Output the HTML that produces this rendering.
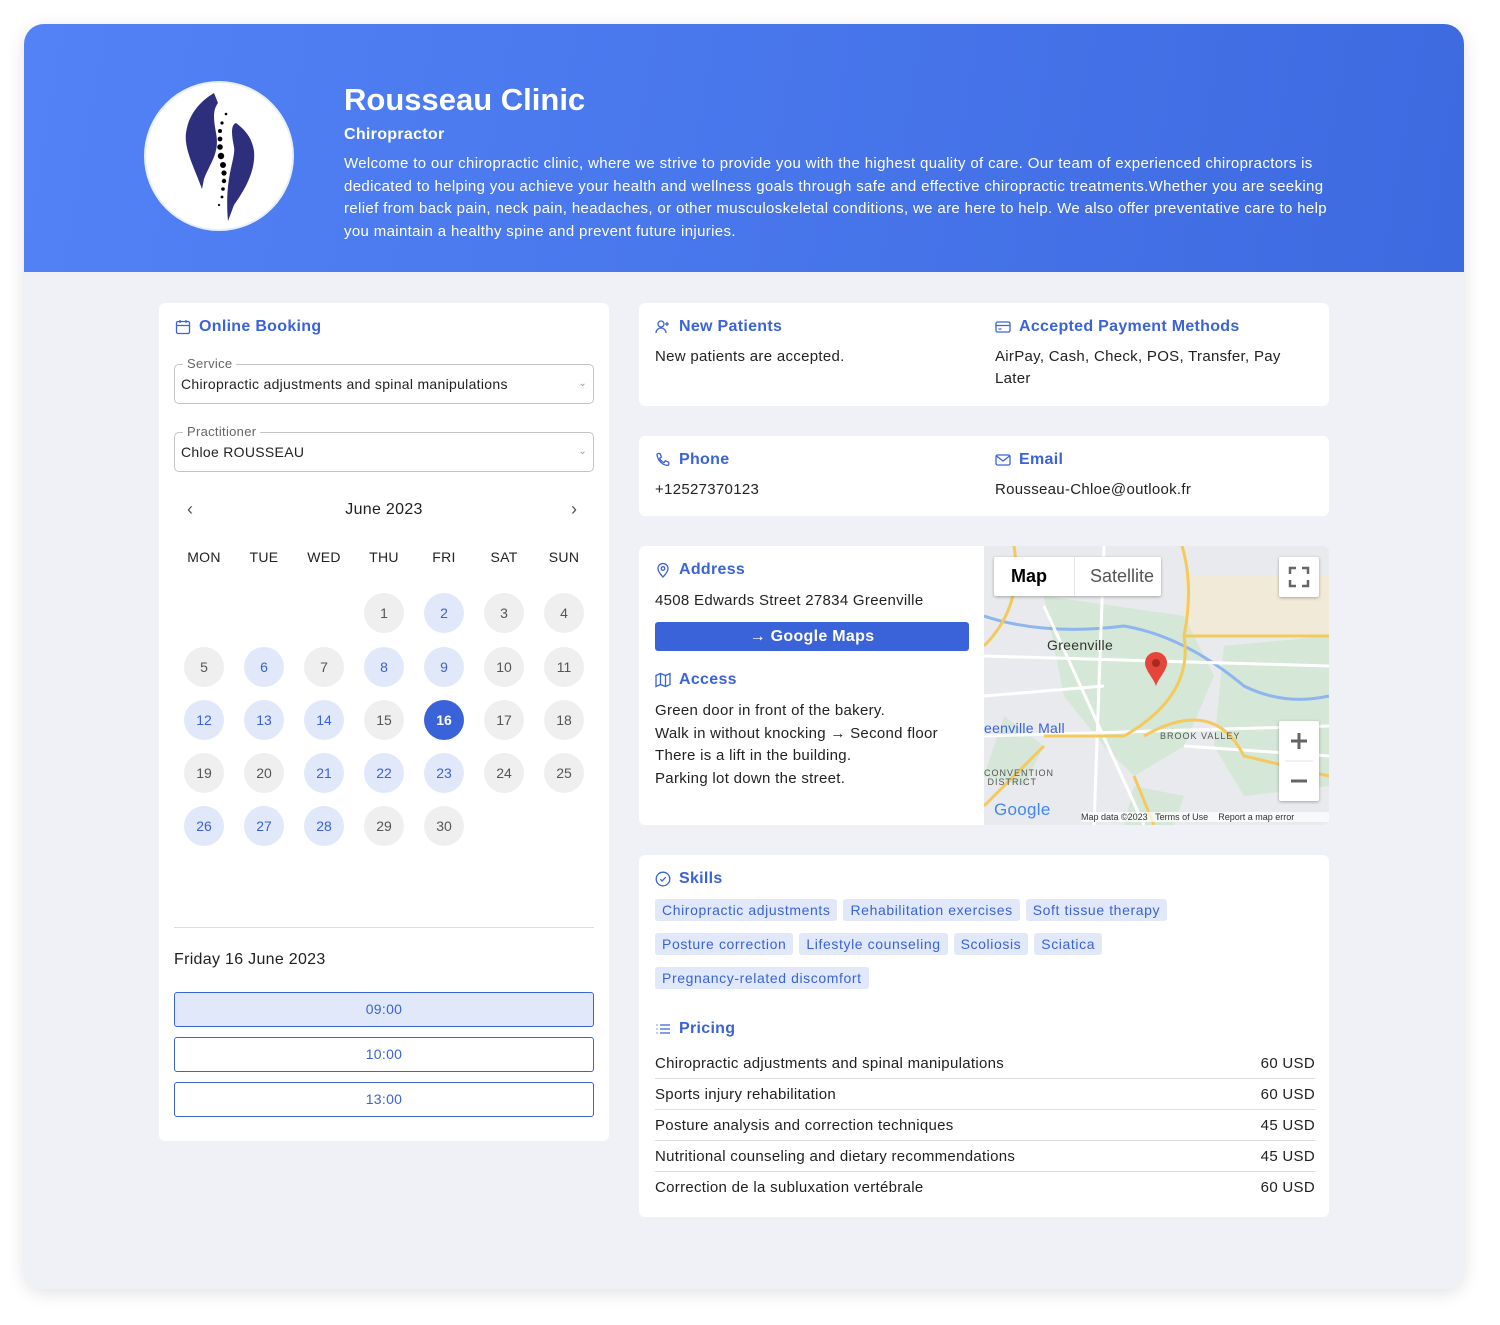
<!DOCTYPE html>
<html><head><meta charset="utf-8"><style>
*{box-sizing:border-box;margin:0;padding:0}
body{width:1500px;height:1325px;background:#fff;font-family:"Liberation Sans",sans-serif;color:#1f1f1f;position:relative;overflow:hidden;letter-spacing:.3px}
.card{position:absolute;left:24px;top:24px;width:1440px;height:1265px;border-radius:20px;background:#eff1f6;box-shadow:0 4px 18px rgba(0,0,0,.12);overflow:hidden}
.hdr{position:absolute;left:0;top:0;width:1440px;height:248px;background:linear-gradient(100deg,#5282f6,#3e6ae0)}
.abs{position:absolute}
.panel{position:absolute;background:#fff;border-radius:6px}
.h{position:absolute;color:#3b63d9;font-size:16px;font-weight:bold;display:flex;align-items:center;gap:8px}
.t{position:absolute;font-size:15px;line-height:22px;color:#222}
.sel{position:absolute;left:15px;width:420px;height:40px;border:1px solid #c4c4c4;border-radius:5px;font-size:14px;padding:11px 6px;color:#222}
.sel .lab{position:absolute;top:-9px;left:8px;background:#fff;padding:0 4px;font-size:13px;color:#666;line-height:16px}
.sel .ch{position:absolute;right:6px;top:13px;font-size:10px;color:#999}
.d{position:absolute;width:40px;height:40px;border-radius:50%;background:#efefef;color:#555;font-size:14px;text-align:center;line-height:40px;letter-spacing:0}
.d.b{background:#e0e8fa;color:#3b63d9}
.d.s{background:#3b63d9;color:#fff;font-weight:bold}
.dow{position:absolute;top:246px;font-size:14px;width:60px;text-align:center;color:#222}
.slot{position:absolute;left:15px;width:420px;height:35px;border:1px solid #3b63d9;border-radius:3px;text-align:center;line-height:33px;color:#3b63d9;font-size:14px}
.tag{display:inline-block;background:#e0e8fa;color:#3b63d9;font-size:14px;padding:3px 7px;border-radius:3px;margin:0 6px 12px 0;line-height:16px;letter-spacing:.6px}
.pr{display:flex;justify-content:space-between;font-size:15px;height:31px;line-height:31px;border-bottom:1px solid #ddd}
.pr:last-child{border-bottom:none}
</style></head><body>
<div class="card">
<div class="hdr">
 <div class="abs" style="left:120px;top:57px;width:150px;height:150px;border-radius:50%;background:#fff;border:2px solid #e8eefc">
  <svg width="150" height="150" viewBox="0 0 150 150" style="position:absolute;left:-2px;top:-2px">
   <path d="M70 12 C60 18 45 30 42 52 C40 68 50 86 58 108 L60 98 C66 82 76 72 72 52 C70 40 68 30 74 22 Z" fill="#2d2f7c"/>
   <path d="M92 42 C86 44 88 56 90 66 C92 78 80 96 84 140 L90 124 C100 110 112 90 110 70 C108 56 100 48 92 42 Z" fill="#2d2f7c"/>
   <g fill="#000"><circle cx="82" cy="33" r="1.3"/><circle cx="78" cy="42" r="1.6"/><circle cx="76" cy="50" r="2"/><circle cx="76" cy="58" r="2.4"/><circle cx="76" cy="66" r="2.8"/><circle cx="77" cy="75" r="3.2"/><circle cx="79" cy="84" r="3"/><circle cx="80" cy="92" r="2.6"/><circle cx="80" cy="100" r="2.2"/><circle cx="79" cy="108" r="1.8"/><circle cx="78" cy="116" r="1.4"/><circle cx="75" cy="124" r="1.1"/></g>
  </svg>
 </div>
 <div class="abs" style="left:320px;top:58px;color:#fff;font-size:31px;font-weight:bold;letter-spacing:0">Rousseau Clinic</div>
 <div class="abs" style="left:320px;top:102px;color:#fff;font-size:16px;font-weight:bold">Chiropractor</div>
 <div class="abs" style="left:320px;top:129px;width:1000px;color:#fff;font-size:15px;line-height:22.5px;letter-spacing:.35px">Welcome to our chiropractic clinic, where we strive to provide you with the highest quality of care. Our team of experienced chiropractors is dedicated to helping you achieve your health and wellness goals through safe and effective chiropractic treatments.Whether you are seeking relief from back pain, neck pain, headaches, or other musculoskeletal conditions, we are here to help. We also offer preventative care to help you maintain a healthy spine and prevent future injuries.</div>
</div>

<div class="panel" style="left:135px;top:279px;width:450px;height:838px">
 <div class="h" style="left:16px;top:15px"><svg width="16" height="16" viewBox="0 0 16 16" fill="none" stroke="#3b63d9" stroke-width="1.3"><rect x="1.5" y="2.5" width="13" height="12" rx="1.5"/><path d="M1.5 6.5h13M5 1v3M11 1v3"/></svg>Online Booking</div>
 <div class="sel" style="top:61px"><span class="lab">Service</span>Chiropractic adjustments and spinal manipulations<span class="ch">&#8964;</span></div>
 <div class="sel" style="top:129px"><span class="lab">Practitioner</span>Chloe ROUSSEAU<span class="ch">&#8964;</span></div>
 <div class="abs" style="left:28px;top:196px;font-size:18px;color:#555">&#8249;</div>
 <div class="abs" style="left:0;width:450px;top:198px;text-align:center;font-size:16px">June 2023</div>
 <div class="abs" style="left:412px;top:196px;font-size:18px;color:#555">&#8250;</div>
 <div class="dow" style="left:15px">MON</div><div class="dow" style="left:75px">TUE</div><div class="dow" style="left:135px">WED</div><div class="dow" style="left:195px">THU</div><div class="dow" style="left:255px">FRI</div><div class="dow" style="left:315px">SAT</div><div class="dow" style="left:375px">SUN</div>
 <div class="d" style="left:205px;top:290px">1</div><div class="d b" style="left:265px;top:290px">2</div><div class="d" style="left:325px;top:290px">3</div><div class="d" style="left:385px;top:290px">4</div>
 <div class="d" style="left:25px;top:344px">5</div><div class="d b" style="left:85px;top:344px">6</div><div class="d" style="left:145px;top:344px">7</div><div class="d b" style="left:205px;top:344px">8</div><div class="d b" style="left:265px;top:344px">9</div><div class="d" style="left:325px;top:344px">10</div><div class="d" style="left:385px;top:344px">11</div>
 <div class="d b" style="left:25px;top:397px">12</div><div class="d b" style="left:85px;top:397px">13</div><div class="d b" style="left:145px;top:397px">14</div><div class="d" style="left:205px;top:397px">15</div><div class="d s" style="left:265px;top:397px">16</div><div class="d" style="left:325px;top:397px">17</div><div class="d" style="left:385px;top:397px">18</div>
 <div class="d" style="left:25px;top:450px">19</div><div class="d" style="left:85px;top:450px">20</div><div class="d b" style="left:145px;top:450px">21</div><div class="d b" style="left:205px;top:450px">22</div><div class="d b" style="left:265px;top:450px">23</div><div class="d" style="left:325px;top:450px">24</div><div class="d" style="left:385px;top:450px">25</div>
 <div class="d b" style="left:25px;top:503px">26</div><div class="d b" style="left:85px;top:503px">27</div><div class="d b" style="left:145px;top:503px">28</div><div class="d" style="left:205px;top:503px">29</div><div class="d" style="left:265px;top:503px">30</div>
 <div class="abs" style="left:15px;top:624px;width:420px;height:1px;background:#ddd"></div>
 <div class="abs" style="left:15px;top:648px;font-size:16px">Friday 16 June 2023</div>
 <div class="slot" style="top:689px;background:#e0e8fa">09:00</div>
 <div class="slot" style="top:734px">10:00</div>
 <div class="slot" style="top:779px">13:00</div>
</div>

<div class="panel" style="left:615px;top:279px;width:690px;height:103px">
 <div class="h" style="left:16px;top:15px"><svg width="16" height="16" viewBox="0 0 16 16" fill="none" stroke="#3b63d9" stroke-width="1.3"><circle cx="6" cy="5" r="3"/><path d="M1 14c0-3 2.5-5 5-5s5 2 5 5M12 3v4M10 5h4"/></svg>New Patients</div>
 <div class="t" style="left:16px;top:43px">New patients are accepted.</div>
 <div class="h" style="left:356px;top:15px"><svg width="16" height="16" viewBox="0 0 16 16" fill="none" stroke="#3b63d9" stroke-width="1.3"><rect x="1" y="3" width="14" height="10" rx="1.5"/><path d="M1 6.5h14M3.5 10h3"/></svg>Accepted Payment Methods</div>
 <div class="t" style="left:356px;top:43px;width:310px">AirPay, Cash, Check, POS, Transfer, Pay Later</div>
</div>

<div class="panel" style="left:615px;top:412px;width:690px;height:80px">
 <div class="h" style="left:16px;top:15px"><svg width="16" height="16" viewBox="0 0 16 16" fill="none" stroke="#3b63d9" stroke-width="1.3"><path d="M2 2.5c0-.5.5-1 1-1h2l1.5 3.5-1.8 1.2c.8 2 2.4 3.6 4.4 4.4l1.2-1.8 3.5 1.5v2c0 .5-.5 1-1 1C7.5 13.3 2.7 8.5 2 2.5z"/></svg>Phone</div>
 <div class="t" style="left:16px;top:43px">+12527370123</div>
 <div class="h" style="left:356px;top:15px"><svg width="16" height="16" viewBox="0 0 16 16" fill="none" stroke="#3b63d9" stroke-width="1.3"><rect x="1" y="3" width="14" height="10" rx="1.5"/><path d="M1.5 4l6.5 5 6.5-5"/></svg>Email</div>
 <div class="t" style="left:356px;top:43px">Rousseau-Chloe@outlook.fr</div>
</div>

<div class="panel" style="left:615px;top:522px;width:690px;height:279px;overflow:hidden">
 <div class="h" style="left:16px;top:15px"><svg width="16" height="16" viewBox="0 0 16 16" fill="none" stroke="#3b63d9" stroke-width="1.3"><path d="M8 15s5-5 5-8.5A5 5 0 0 0 3 6.5C3 10 8 15 8 15z"/><circle cx="8" cy="6.5" r="1.8"/></svg>Address</div>
 <div class="t" style="left:16px;top:44px">4508 Edwards Street 27834 Greenville</div>
 <div class="abs" style="left:16px;top:76px;width:314px;height:29px;background:#3b63d9;border-radius:3px;color:#fff;text-align:center;line-height:29px;font-size:16px;font-weight:bold">&#8594; Google Maps</div>
 <div class="h" style="left:16px;top:125px"><svg width="16" height="16" viewBox="0 0 16 16" fill="none" stroke="#3b63d9" stroke-width="1.3"><path d="M1 3.5l4.5-2 5 2 4.5-2v11l-4.5 2-5-2-4.5 2z M5.5 1.5v11M10.5 3.5v11"/></svg>Access</div>
 <div class="t" style="left:16px;top:154px;line-height:22.5px">Green door in front of the bakery.<br>Walk in without knocking &#8594; Second floor<br>There is a lift in the building.<br>Parking lot down the street.</div>
 <div class="abs" style="left:345px;top:0;width:345px;height:279px;background:#e8eaed;overflow:hidden">
  <svg width="345" height="279" viewBox="0 0 345 279" style="position:absolute;left:0;top:0">
   <rect x="200" y="30" width="145" height="60" fill="#f2ead8"/>
   <path d="M60 50 L200 70 L230 130 L200 200 L150 230 L120 200 L80 150 Z" fill="#cfe6d0" opacity=".8"/>
   <path d="M240 100 L345 90 L345 240 L260 250 L230 200 Z" fill="#cfe6d0" opacity=".8"/>
   <path d="M20 170 L60 200 L40 240 L0 230Z M150 240 L200 250 L190 279 L140 279Z" fill="#cfe6d0" opacity=".7"/>
   <path d="M0 70 Q60 90 140 80 Q200 90 260 140 Q300 160 345 150" stroke="#8fb5f0" stroke-width="3" fill="none"/>
   <path d="M0 110 L345 120 M0 190 L345 180 M120 0 L110 279 M60 60 L160 279 M0 150 L120 140 M200 200 L345 210" stroke="#fff" stroke-width="3" fill="none"/>
   <path d="M198 0 Q210 40 200 90 L345 90 M200 90 Q210 150 140 190 L60 190 M160 190 Q230 150 260 210 L345 230 M0 100 Q40 60 30 0 M150 230 L170 279 M0 260 L60 200" stroke="#f4c95d" stroke-width="3" fill="none"/>
   <path d="M161 117 a11 11 0 1 1 22 0 c0 8-11 18-11 24 c0-6-11-16-11-24z" fill="#e5453a"/>
   <circle cx="172" cy="117" r="4" fill="#a52a20"/>
  </svg>
  <div class="abs" style="left:63px;top:91px;font-size:14px;color:#333">Greenville</div>
  <div class="abs" style="left:0;top:174px;font-size:14px;color:#3b63d9">eenville Mall</div>
  <div class="abs" style="left:176px;top:185px;font-size:9px;letter-spacing:1px;color:#555">BROOK VALLEY</div>
  <div class="abs" style="left:0;top:223px;font-size:9px;letter-spacing:1px;color:#555;line-height:9px">CONVENTION<br>&nbsp;DISTRICT</div>
  <div class="abs" style="left:10px;top:254px;font-size:17px;color:#4285f4">Google</div>
  <div class="abs" style="left:97px;top:266px;font-size:9px;color:#333;background:rgba(255,255,255,.7);width:248px;letter-spacing:0">Map data ©2023 &nbsp;&nbsp;Terms of Use &nbsp;&nbsp;&nbsp;Report a map error</div>
  <div class="abs" style="left:10px;top:11px;width:167px;height:39px;background:#fff;border-radius:2px;box-shadow:0 1px 3px rgba(0,0,0,.3);font-size:18px;line-height:39px;letter-spacing:0"><span style="position:absolute;left:17px;color:#000;font-weight:bold">Map</span><span style="position:absolute;left:80px;width:1px;height:39px;background:#e5e5e5"></span><span style="position:absolute;left:96px;color:#555">Satellite</span></div>
  <div class="abs" style="left:295px;top:11px;width:40px;height:40px;background:#fff;border-radius:2px;box-shadow:0 1px 3px rgba(0,0,0,.3)"><svg width="40" height="40"><path d="M11 17v-6h6M23 11h6v6M29 23v6h-6M17 29h-6v-6" stroke="#666" stroke-width="2.5" fill="none"/></svg></div>
  <div class="abs" style="left:295px;top:175px;width:40px;height:80px;background:#fff;border-radius:2px;box-shadow:0 1px 3px rgba(0,0,0,.3)"><svg width="40" height="80"><path d="M20 12v16M12 20h16M12 60h16" stroke="#666" stroke-width="3"/><path d="M6 40h28" stroke="#e6e6e6"/></svg></div>
 </div>
</div>

<div class="panel" style="left:615px;top:831px;width:690px;height:362px">
 <div class="h" style="left:16px;top:15px"><svg width="16" height="16" viewBox="0 0 16 16" fill="none" stroke="#3b63d9" stroke-width="1.3"><circle cx="8" cy="8" r="6.8"/><path d="M5.3 8.2l1.8 1.8 3.6-3.8"/></svg>Skills</div>
 <div class="abs" style="left:16px;top:44px;width:670px">
  <span class="tag">Chiropractic adjustments</span><span class="tag">Rehabilitation exercises</span><span class="tag">Soft tissue therapy</span><br>
  <span class="tag">Posture correction</span><span class="tag">Lifestyle counseling</span><span class="tag">Scoliosis</span><span class="tag">Sciatica</span><br>
  <span class="tag">Pregnancy-related discomfort</span>
 </div>
 <div class="h" style="left:16px;top:165px"><svg width="16" height="16" viewBox="0 0 16 16" fill="none" stroke="#3b63d9" stroke-width="1.3"><path d="M5 4h10M5 8h10M5 12h10M1.5 4h1M1.5 8h1M1.5 12h1"/></svg>Pricing</div>
 <div class="abs" style="left:16px;top:193px;width:660px">
  <div class="pr"><span>Chiropractic adjustments and spinal manipulations</span><span>60 USD</span></div>
  <div class="pr"><span>Sports injury rehabilitation</span><span>60 USD</span></div>
  <div class="pr"><span>Posture analysis and correction techniques</span><span>45 USD</span></div>
  <div class="pr"><span>Nutritional counseling and dietary recommendations</span><span>45 USD</span></div>
  <div class="pr"><span>Correction de la subluxation vertébrale</span><span>60 USD</span></div>
 </div>
</div>
</div>
</body></html>
